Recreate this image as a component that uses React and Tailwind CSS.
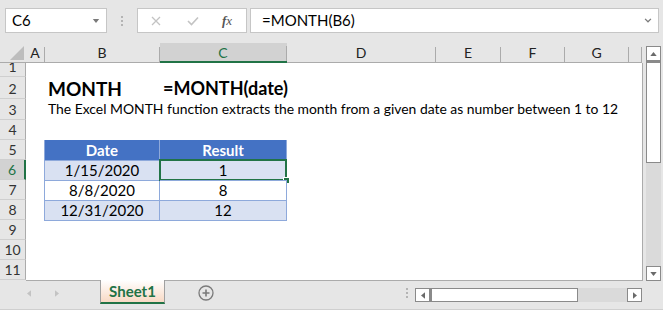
import React from "react";

const COLS = [
  { id: "A", w: "w-[19px]" },
  { id: "B", w: "w-[115px]" },
  { id: "C", w: "w-[127px]", active: true },
  { id: "D", w: "w-[149px]" },
  { id: "E", w: "w-[65px]" },
  { id: "F", w: "w-[64px]" },
  { id: "G", w: "w-[64px]" },
  { id: "", w: "w-[13px]" },
];

const ROWS = [
  { n: 1, h: "h-[14px]" },
  { n: 2, h: "h-[22px]" },
  { n: 3, h: "h-[21px]" },
  { n: 4, h: "h-[20px]" },
  { n: 5, h: "h-[20px]" },
  { n: 6, h: "h-[20px]", active: true },
  { n: 7, h: "h-[20px]" },
  { n: 8, h: "h-[20px]" },
  { n: 9, h: "h-[20px]" },
  { n: 10, h: "h-[20px]" },
  { n: 11, h: "h-[20px]" },
];

const TABLE = {
  6: ["1/15/2020", "1", true],
  7: ["8/8/2020", "8", false],
  8: ["12/31/2020", "12", true],
};

const RowContent = ({ n }) => {
  if (n === 2) {
    return (
      <div className="flex items-center h-full">
        <div className="w-[19px]" />
        <div className="w-[115px] pl-[3px] text-[19px] font-bold leading-none">MONTH</div>
        <div className="pl-[3px] text-[18px] font-bold leading-none whitespace-nowrap">=MONTH(date)</div>
      </div>
    );
  }
  if (n === 3) {
    return (
      <div className="flex items-center h-full">
        <div className="w-[19px]" />
        <div className="pl-[3px] whitespace-nowrap text-[13.9px]">
          The Excel MONTH function extracts the month from a given date as number between 1 to 12
        </div>
      </div>
    );
  }
  if (n === 5) {
    return (
      <div className="flex h-full">
        <div className="w-[18px]" />
        <div className="w-[116px] bg-[#4472c4] text-white font-bold text-center border-l border-r border-[#8ea9db] leading-[20px]">Date</div>
        <div className="w-[127px] bg-[#4472c4] text-white font-bold text-center border-r border-[#8ea9db] leading-[20px]">Result</div>
      </div>
    );
  }
  if (TABLE[n]) {
    const [d, r, shade] = TABLE[n];
    const bg = shade ? "bg-[#d9e1f2]" : "bg-white";
    return (
      <div className="flex h-full">
        <div className="w-[18px]" />
        <div className={`w-[116px] ${bg} text-center border-l border-r border-t border-[#8ea9db] leading-[19px]`}>{d}</div>
        <div className={`relative w-[127px] ${bg} text-center border-r border-t border-[#8ea9db] leading-[19px]`}>
          {r}
          {n === 6 && (
            <>
              <div className="absolute -left-[1px] -top-[2px] -right-[1px] -bottom-[1px] border-2 border-[#217346]" />
              <div className="absolute -right-[4px] -bottom-[4px] w-[7px] h-[7px] bg-[#217346] border border-white" />
            </>
          )}
        </div>
      </div>
    );
  }
  if (n === 9) {
    return (
      <div className="flex h-full">
        <div className="w-[18px]" />
        <div className="w-[243px] border-t border-[#8ea9db]" />
      </div>
    );
  }
  return null;
};

const Tri = ({ dir, className }) => {
  const pts = {
    up: "0,5 4,0 8,5",
    down: "0,0 8,0 4,5",
    left: "5,0 5,8 0,4",
    right: "0,0 0,8 5,4",
  }[dir];
  const box = dir === "up" || dir === "down" ? "0 0 8 5" : "0 0 5 8";
  return (
    <svg viewBox={box} className={className}>
      <polygon points={pts} fill="currentColor" />
    </svg>
  );
};

const App = () => {
  return (
    <div
      className="w-[663px] h-[310px] bg-[#e6e6e6] flex flex-col overflow-hidden text-[15px] text-black"
      style={{ fontFamily: "Lato, 'Open Sans', sans-serif" }}
    >
      {/* Formula bar */}
      <div className="h-[43px] flex items-start pt-[8px] pl-[5px] shrink-0">
        <div className="w-[102px] h-[25px] bg-white border border-[#c6c6c6] flex items-center pl-[6px] pr-[6px]">
          <span className="flex-1">C6</span>
          <Tri dir="down" className="w-[8px] h-[4px] text-[#7a7a7a]" />
        </div>
        <div className="w-[30px] h-[25px] flex flex-col items-center justify-center gap-[2px]">
          <span className="w-[2px] h-[2px] bg-[#b4b4b4]" />
          <span className="w-[2px] h-[2px] bg-[#b4b4b4]" />
          <span className="w-[2px] h-[2px] bg-[#b4b4b4]" />
        </div>
        <div className="w-[110px] h-[25px] bg-white border border-[#c6c6c6] flex items-center">
          <svg viewBox="0 0 10 10" className="w-[10px] h-[10px] ml-[13px]">
            <path d="M1 1L9 9M9 1L1 9" stroke="#c3c3c3" strokeWidth="1.3" />
          </svg>
          <svg viewBox="0 0 12 10" className="w-[12px] h-[10px] ml-[26px]">
            <path d="M1 5L4.5 8.5L11 1.5" stroke="#c3c3c3" strokeWidth="1.6" fill="none" />
          </svg>
          <span
            className="ml-[23px] italic text-[13px] text-[#555]"
            style={{ fontFamily: "'Liberation Serif', serif" }}
          >
            <b>f</b>x
          </span>
        </div>
        <div className="ml-[3px] w-[409px] h-[25px] bg-white border border-[#c6c6c6] flex items-center pl-[11px] pr-[6px]">
          <span className="flex-1">=MONTH(B6)</span>
          <svg viewBox="0 0 9 6" className="w-[8px] h-[5px]">
            <path d="M1 1L4.5 4.5L8 1" stroke="#7a7a7a" strokeWidth="1.5" fill="none" />
          </svg>
        </div>
      </div>

      {/* Sheet + vertical scrollbar */}
      <div className="flex flex-1 min-h-0">
        <div className="flex flex-col w-[643px]">
          {/* Column headers */}
          <div className="flex h-[20px] shrink-0">
            <div className="w-[26px] flex items-end justify-end pr-[2px] pb-[2px] border-b border-[#ababab]">
              <svg viewBox="0 0 14 14" className="w-[14px] h-[14px]">
                <polygon points="14,0 14,14 0,14" fill="#bdbdbd" />
              </svg>
            </div>
            {COLS.map((c) => (
              <div
                key={c.id || "x"}
                className={`${c.w} flex ${
                  c.active
                    ? "bg-[#d2d2d2] text-[#217346] border-b-2 border-[#217346]"
                    : "border-b border-[#ababab] text-[#222]"
                }`}
              >
                <div className="flex-1 flex items-center justify-center text-[14px]">{c.id}</div>
                <div className="w-px h-[15px] self-end bg-[#ababab]" />
              </div>
            ))}
          </div>

          {/* Rows */}
          {ROWS.map((r) => (
            <div key={r.n} className={`flex ${r.h} shrink-0`}>
              <div
                className={`w-[26px] shrink-0 flex flex-col justify-end overflow-hidden text-[14px] border-b border-[#cfcfcf] ${
                  r.active
                    ? "bg-[#d2d2d2] text-[#217346] border-r-2 border-r-[#217346]"
                    : "border-r border-r-[#ababab] text-[#333]"
                }`}
              >
                <div className="h-[19px] shrink-0 flex items-center justify-center">{r.n}</div>
              </div>
              <div className="flex-1 bg-white border-r border-[#ababab]">
                <RowContent n={r.n} />
              </div>
            </div>
          ))}
          <div className="h-px bg-[#ababab] ml-[26px]" />
        </div>

        {/* Vertical scrollbar */}
        <div className="w-[20px] flex flex-col pl-[3px] pr-[2px] pt-[3px]">
          <div className="h-[15px] bg-white border border-[#8a8a8a] flex items-center justify-center">
            <Tri dir="up" className="w-[7px] h-[4px] text-[#6a6a6a]" />
          </div>
          <div className="flex-1 bg-[#dadada] flex flex-col">
            <div className="h-[102px] bg-white border border-[#8a8a8a] border-t-2" />
          </div>
          <div className="h-[15px] bg-white border border-[#8a8a8a] flex items-center justify-center">
            <Tri dir="down" className="w-[7px] h-[4px] text-[#6a6a6a]" />
          </div>
        </div>
      </div>

      {/* Sheet tabs / horizontal scrollbar */}
      <div className="h-[29px] shrink-0 flex items-start border-b border-[#cfcfcf]">
        <div className="w-[100px] h-[24px] flex items-center pl-[27px] gap-[24px] text-[#c3c3c3]">
          <Tri dir="left" className="w-[4px] h-[7px]" />
          <Tri dir="right" className="w-[4px] h-[7px]" />
        </div>
        <div className="w-[65px] h-[24px] -mt-px border-l border-r border-[#a0a0a0] border-b-2 border-b-[#217346] bg-gradient-to-b from-white to-[#f8d9c4] flex items-center justify-center text-[#217346] font-bold text-[15px]">
          Sheet1
        </div>
        <div className="w-[82px] h-[24px] flex items-center justify-center">
          <svg viewBox="0 0 16 16" className="w-[16px] h-[16px]">
            <circle cx="8" cy="8" r="7" fill="none" stroke="#7a7a7a" strokeWidth="1.3" />
            <path d="M8 4.5V11.5M4.5 8H11.5" stroke="#7a7a7a" strokeWidth="1.6" />
          </svg>
        </div>
        <div className="w-[152px]" />
        <div className="h-[24px] w-[16px] flex flex-col items-center justify-center gap-[2px]">
          <span className="w-[2px] h-[2px] bg-[#b4b4b4]" />
          <span className="w-[2px] h-[2px] bg-[#b4b4b4]" />
          <span className="w-[2px] h-[2px] bg-[#b4b4b4]" />
        </div>
        <div className="mt-[7px] w-[227px] h-[14px] flex bg-[#dadada]">
          <div className="w-[15px] bg-white border border-[#8a8a8a] flex items-center justify-center">
            <Tri dir="left" className="w-[4px] h-[7px] text-[#6a6a6a]" />
          </div>
          <div className="w-[148px] bg-white border border-[#8a8a8a] border-l-2" />
          <div className="flex-1" />
          <div className="w-[15px] bg-white border border-[#8a8a8a] flex items-center justify-center">
            <Tri dir="right" className="w-[4px] h-[7px] text-[#6a6a6a]" />
          </div>
        </div>
      </div>
    </div>
  );
};

export default App;
